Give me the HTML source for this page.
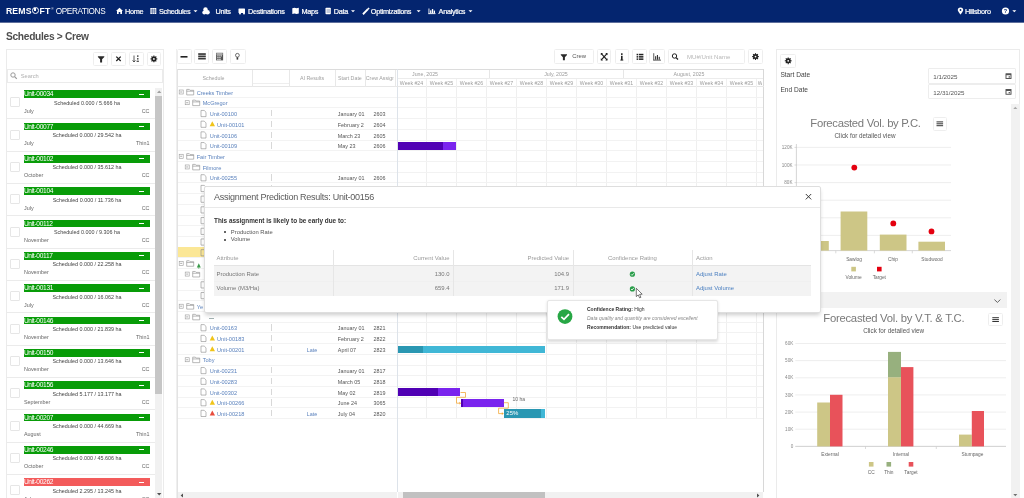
<!DOCTYPE html>
<html><head><meta charset="utf-8"><style>
*{box-sizing:border-box}
html,body{margin:0;padding:0}
body{will-change:transform;width:1024px;height:498px;overflow:hidden;position:relative;background:#fff;font-family:"Liberation Sans",sans-serif;color:#333}
.a{position:absolute;white-space:nowrap}
.nt{position:absolute;color:#fff;font-size:7.3px;top:7.6px;line-height:8px;white-space:nowrap;letter-spacing:-0.3px;-webkit-text-stroke:0.2px #fff}
.btn{position:absolute;border:1px solid #eeeeee;border-radius:1.5px;background:#fff}
.li{position:absolute;left:6px;width:149px;border-bottom:1px solid #ebebeb}
.gb{position:absolute;left:17.7px;top:3.3px;width:126.3px;height:7.7px;background:#089c08;color:#fff;font-size:6.6px;line-height:7.8px;padding-left:0.2px;letter-spacing:-0.3px;white-space:nowrap}
.gb.red{background:#f35b5b}
.gb i{position:absolute;right:6px;top:3.3px;width:4.6px;height:1.1px;background:#fff}
.cb{position:absolute;left:3.6px;top:10.3px;width:10px;height:10px;border:1px solid #e6e6e6;border-radius:1px}
.sc{position:absolute;left:0;width:149px;top:12.6px;text-align:center;font-size:5.4px;line-height:6px;color:#444;padding-left:13px;white-space:nowrap}
.mo{position:absolute;left:18px;top:20.8px;font-size:5.4px;line-height:6px;color:#666}
.ty{position:absolute;right:5.5px;top:20.8px;font-size:5.4px;line-height:6px;color:#666}
.rw{position:absolute;left:177px;width:221px;border-bottom:1px solid #efefef}
.rt{position:absolute;font-size:5.6px;white-space:nowrap}
.lk{color:#5b82bd}
.pipe{position:absolute;width:0.7px;background:#d8d8d8}
.hd{position:absolute;font-size:5.3px;color:#a0a0a0;white-space:nowrap}
</style></head><body>
<div class="a" style="left:0;top:0;width:1024px;height:22px;background:#04256f"></div><div class="a" style="left:0;top:22px;width:1024px;height:1px;background:#5e6f9c"></div>
<div class="a" style="left:5.9px;top:6.6px;color:#fff;font-size:8.7px;line-height:9px;letter-spacing:0.2px;font-weight:bold">REMS<span style="display:inline-block;width:6.8px;height:6.8px;border:1.7px solid #fff;border-radius:50%;vertical-align:-0.3px;margin:0 0.4px;position:relative"><span style="position:absolute;left:1.1px;top:0.4px;width:1.3px;height:2.6px;background:#fff"></span></span>FT</div>
<div class="a" style="left:51.3px;top:7.9px;color:#fff;font-size:3.2px;line-height:3px">&#174;</div>
<div class="a" style="left:55.7px;top:6.8px;color:#fff;font-size:8.2px;line-height:9px;letter-spacing:-0.35px">OPERATIONS</div>
<div class="nt" style="left:125px">Home</div>
<div class="nt" style="left:159px">Schedules</div>
<div class="nt" style="left:215.6px">Units</div>
<div class="nt" style="left:248px">Destinations</div>
<div class="nt" style="left:301.5px">Maps</div>
<div class="nt" style="left:333.7px">Data</div>
<div class="nt" style="left:370.8px">Optimizations</div>
<div class="nt" style="left:438.6px">Analytics</div>
<div class="nt" style="left:965px">Hillsboro</div>
<svg class="a" style="left:0;top:0" width="1024" height="22" viewBox="0 0 1024 22">
<g fill="#fff">
<path d="M116 11 L119.5 7.8 L123 11 L122 11 L122 14 L120.3 14 L120.3 12 L118.7 12 L118.7 14 L117 14 L117 11 Z"/>
<rect x="150.3" y="8" width="6" height="6" rx="0.5"/>
<path d="M193.5 10.2 L197.5 10.2 L195.5 12.3 Z"/>
<circle cx="205.5" cy="9.5" r="2.2"/><circle cx="207.5" cy="12.3" r="2.3"/><circle cx="204.3" cy="12.6" r="2"/>
<rect x="238.5" y="8.5" width="6.5" height="4.6" rx="0.6"/><circle cx="240" cy="13.5" r="1"/><circle cx="244" cy="13.5" r="1"/>
<path d="M292.3 8.3 L294.5 7.8 L296.6 8.3 L298.8 7.8 L298.8 13.6 L296.6 14.1 L294.5 13.6 L292.3 14.1 Z"/>
<rect x="325.5" y="7.8" width="5.3" height="6.5" rx="0.8"/>
<path d="M351 10.2 L355 10.2 L353 12.3 Z"/>
<path d="M362.3 13.6 L367.2 8.4 L368.6 9.8 L363.6 14.9 Z"/><path d="M368.5 7.2 L369 8.2 L370 8.5 L369 8.9 L368.5 9.9 L368 8.9 L367 8.5 L368 8.2 Z"/>
<path d="M416.6 10.2 L420.6 10.2 L418.6 12.3 Z"/>
<rect x="428.5" y="8.5" width="0.9" height="5.6"/><rect x="428.5" y="13.2" width="7" height="0.9"/><rect x="430.1" y="10.3" width="1.3" height="2.9"/><rect x="431.9" y="9" width="1.3" height="4.2"/><rect x="433.7" y="10.6" width="1.3" height="2.6"/>
<path d="M468.5 10.2 L472.5 10.2 L470.5 12.3 Z"/>
<path d="M960.5 7.6 C958.6 7.6 957.8 9 957.8 10 C957.8 11.5 960.5 14.6 960.5 14.6 C960.5 14.6 963.2 11.5 963.2 10 C963.2 9 962.4 7.6 960.5 7.6 Z"/>
<circle cx="1005.5" cy="11" r="3.6"/>
<path d="M1012.3 10.2 L1016.3 10.2 L1014.3 12.3 Z"/>
</g>
<circle cx="960.5" cy="10" r="0.9" fill="#04256f"/>
<text x="1005.5" y="13" font-size="5.5" font-weight="bold" text-anchor="middle" fill="#04256f" font-family="Liberation Sans">?</text>
<g stroke="#04256f" stroke-width="0.5"><line x1="150.3" y1="10" x2="156.3" y2="10"/><line x1="150.3" y1="12" x2="156.3" y2="12"/><line x1="152.3" y1="8.5" x2="152.3" y2="14"/><line x1="154.3" y1="8.5" x2="154.3" y2="14"/>
<line x1="326.5" y1="10" x2="330" y2="10"/><line x1="326.5" y1="12" x2="330" y2="12"/></g>
</svg>
<div class="a" style="left:6px;top:31.6px;font-size:10.2px;line-height:10px;font-weight:bold;color:#4e4e4e;letter-spacing:-0.3px">Schedules &gt; Crew</div>
<div class="a" style="left:5.5px;top:49px;width:158.3px;height:470px;border:1px solid #ebebeb"></div>
<div class="btn" style="left:93.4px;top:52px;width:14.6px;height:14px"></div>
<div class="btn" style="left:111.2px;top:52px;width:14.6px;height:14px"></div>
<div class="btn" style="left:128.6px;top:52px;width:15px;height:14px"></div>
<div class="btn" style="left:146.6px;top:52px;width:14.6px;height:14px"></div>
<div class="a" style="left:7px;top:69px;width:155.8px;height:14.4px;border:1px solid #ebebeb"></div>
<div class="a" style="left:20.7px;top:72.8px;font-size:5.7px;line-height:7px;color:#b0b0b0">Search</div>
<div class="li" style="top:87.00px;height:32.33px"><div class="cb"></div><div class="gb">Unit-00034<i></i></div><div class="sc">Scheduled 0.000 / 5.666 ha</div><div class="mo">July</div><div class="ty">CC</div></div>
<div class="li" style="top:119.33px;height:32.33px"><div class="cb"></div><div class="gb">Unit-00077<i></i></div><div class="sc">Scheduled 0.000 / 29.542 ha</div><div class="mo">July</div><div class="ty">Thin1</div></div>
<div class="li" style="top:151.66px;height:32.33px"><div class="cb"></div><div class="gb">Unit-00102<i></i></div><div class="sc">Scheduled 0.000 / 35.612 ha</div><div class="mo">October</div><div class="ty">CC</div></div>
<div class="li" style="top:183.99px;height:32.33px"><div class="cb"></div><div class="gb">Unit-00104<i></i></div><div class="sc">Scheduled 0.000 / 11.736 ha</div><div class="mo">July</div><div class="ty">CC</div></div>
<div class="li" style="top:216.32px;height:32.33px"><div class="cb"></div><div class="gb">Unit-00112<i></i></div><div class="sc">Scheduled 0.000 / 9.306 ha</div><div class="mo">November</div><div class="ty">CC</div></div>
<div class="li" style="top:248.65px;height:32.33px"><div class="cb"></div><div class="gb">Unit-00117<i></i></div><div class="sc">Scheduled 0.000 / 22.258 ha</div><div class="mo">November</div><div class="ty">CC</div></div>
<div class="li" style="top:280.98px;height:32.33px"><div class="cb"></div><div class="gb">Unit-00131<i></i></div><div class="sc">Scheduled 0.000 / 16.062 ha</div><div class="mo">July</div><div class="ty">CC</div></div>
<div class="li" style="top:313.31px;height:32.33px"><div class="cb"></div><div class="gb">Unit-00146<i></i></div><div class="sc">Scheduled 0.000 / 21.839 ha</div><div class="mo">November</div><div class="ty">Thin1</div></div>
<div class="li" style="top:345.64px;height:32.33px"><div class="cb"></div><div class="gb">Unit-00150<i></i></div><div class="sc">Scheduled 0.000 / 13.646 ha</div><div class="mo">November</div><div class="ty">CC</div></div>
<div class="li" style="top:377.97px;height:32.33px"><div class="cb"></div><div class="gb">Unit-00156<i></i></div><div class="sc">Scheduled 5.177 / 13.177 ha</div><div class="mo">September</div><div class="ty">CC</div></div>
<div class="li" style="top:410.30px;height:32.33px"><div class="cb"></div><div class="gb">Unit-00207<i></i></div><div class="sc">Scheduled 0.000 / 44.669 ha</div><div class="mo">August</div><div class="ty">Thin1</div></div>
<div class="li" style="top:442.63px;height:32.33px"><div class="cb"></div><div class="gb">Unit-00246<i></i></div><div class="sc">Scheduled 0.000 / 45.606 ha</div><div class="mo">October</div><div class="ty">CC</div></div>
<div class="li" style="top:474.96px;height:32.33px"><div class="cb"></div><div class="gb red">Unit-00262<i></i></div><div class="sc">Scheduled 2.295 / 13.245 ha</div><div class="mo">July</div><div class="ty">CC</div></div>
<div class="a" style="left:155.4px;top:88px;width:6.6px;height:410px;background:#f1f1f1"></div>
<div class="a" style="left:155.4px;top:95.6px;width:6.6px;height:298px;background:#c6c6c6"></div>
<svg class="a" style="left:155px;top:88px" width="8" height="8"><path d="M2 5 L4.2 2.6 L6.4 5 Z" fill="#a0a0a0"/></svg>
<svg class="a" style="left:155px;top:490px" width="8" height="8"><path d="M2 3 L4.2 5.4 L6.4 3 Z" fill="#505050"/></svg>
<svg class="a" style="left:90px;top:50px" width="75" height="18" viewBox="90 50 75 18">
<path d="M97.9 56.2 L104.3 56.2 L104.3 57 L102.1 59.2 L102.1 62.4 L100.1 62.4 L100.1 59.2 L97.9 57 Z" fill="#2a2a2a"/>
<path d="M116.3 56.6 L120.7 61 M120.7 56.6 L116.3 61" stroke="#222" stroke-width="1.3"/>
<path d="M134 55.5 L134 62 M132.6 60.4 L134 62 L135.4 60.4" stroke="#333" stroke-width="0.8" fill="none"/>
<rect x="137" y="55.3" width="1.5" height="1.6" fill="#555"/><rect x="137" y="58" width="1.5" height="1.6" fill="#555"/><rect x="136.6" y="60.6" width="2.3" height="1.4" fill="#555"/>
<circle cx="153.9" cy="58.9" r="2.5" fill="#222"/><circle cx="153.9" cy="58.9" r="0.9" fill="#fff"/>
<g stroke="#222" stroke-width="1.1"><line x1="153.9" y1="55.5" x2="153.9" y2="62.3"/><line x1="150.5" y1="58.9" x2="157.3" y2="58.9"/><line x1="151.5" y1="56.5" x2="156.3" y2="61.3"/><line x1="156.3" y1="56.5" x2="151.5" y2="61.3"/></g>
<circle cx="153.9" cy="58.9" r="0.9" fill="#fff"/>
</svg>
<svg class="a" style="left:8px;top:70px" width="12" height="12"><circle cx="5" cy="5" r="2.2" stroke="#999" stroke-width="1" fill="none"/><line x1="6.6" y1="6.6" x2="8.8" y2="8.8" stroke="#999" stroke-width="1.2"/></svg>
<div class="a" style="left:175.5px;top:49px;width:1px;height:449px;background:#efefef"></div>
<div class="btn" style="left:176.6px;top:49.4px;width:15.1px;height:14.8px"></div>
<div class="btn" style="left:194px;top:49.4px;width:15.0px;height:14.8px"></div>
<div class="btn" style="left:212px;top:49.4px;width:15.0px;height:14.8px"></div>
<div class="btn" style="left:230px;top:49.4px;width:16.0px;height:14.8px"></div>
<div class="btn" style="left:553.6px;top:49.2px;width:40.4px;height:14.8px"></div>
<div class="btn" style="left:596.7px;top:49.2px;width:14.8px;height:14.8px"></div>
<div class="btn" style="left:614.5px;top:49.2px;width:14.5px;height:14.8px"></div>
<div class="btn" style="left:632px;top:49.2px;width:15.3px;height:14.8px"></div>
<div class="btn" style="left:649.4px;top:49.2px;width:15.3px;height:14.8px"></div>
<div class="btn" style="left:668.4px;top:49.2px;width:76.6px;height:14.8px"></div>
<div class="btn" style="left:748px;top:49.2px;width:15.0px;height:14.8px"></div>
<div class="a" style="left:572.3px;top:53.4px;font-size:5.9px;line-height:7px;color:#555">Crew</div>
<div class="a" style="left:687px;top:53.4px;font-size:6.1px;line-height:7px;color:#b8b8b8">MU#/Unit Name</div>
<svg class="a" style="left:170px;top:45px" width="600" height="24" viewBox="170 45 600 24">
<rect x="180.5" y="56" width="7" height="1.6" fill="#222"/>
<g fill="#3a3a3a"><rect x="198.2" y="53.2" width="7.6" height="1.7"/><rect x="198.2" y="55.5" width="7.6" height="1.7"/><rect x="198.2" y="57.8" width="7.6" height="1.7"/></g>
<rect x="216.1" y="52.8" width="7" height="7.6" fill="#555"/><rect x="216.6" y="53.5" width="6" height="1" fill="#fff"/><g fill="#fff"><rect x="217.3" y="55.3" width="1.3" height="1.1"/><rect x="219.3" y="55.3" width="1.3" height="1.1"/><rect x="221" y="55.3" width="0.8" height="1.1"/><rect x="217.3" y="57.2" width="1.3" height="1.1"/><rect x="219.3" y="57.2" width="1.3" height="1.1"/><rect x="217.3" y="59.1" width="1.3" height="1.1"/><rect x="219.3" y="59.1" width="1.3" height="1.1"/></g>
<circle cx="237.4" cy="55.3" r="1.9" fill="none" stroke="#333" stroke-width="0.7"/><rect x="236.6" y="57.3" width="1.6" height="2.3" fill="#333"/>
<path d="M560.8 54.3 L567 54.3 L567 55.1 L564.9 57.2 L564.9 60.2 L562.9 60.2 L562.9 57.2 L560.8 55.1 Z" fill="#2a2a2a"/>
<g stroke="#222" stroke-width="1.2"><line x1="601.3" y1="53.6" x2="607" y2="59.8"/><line x1="607" y1="53.6" x2="601.3" y2="59.8"/></g>
<g fill="#222"><path d="M600.8 53 L603 53 L600.8 55.2Z"/><path d="M607.5 53 L605.3 53 L607.5 55.2Z"/><path d="M600.8 60.4 L603 60.4 L600.8 58.2Z"/><path d="M607.5 60.4 L605.3 60.4 L607.5 58.2Z"/></g>
<rect x="621" y="53.3" width="1.6" height="1.6" fill="#222"/><rect x="621" y="55.8" width="1.6" height="4.4" fill="#222"/><rect x="620.3" y="59.6" width="3" height="0.9" fill="#222"/>
<g fill="#222"><rect x="636.6" y="53.8" width="1.5" height="1.5"/><rect x="638.8" y="53.8" width="4.6" height="1.5"/><rect x="636.6" y="56.1" width="1.5" height="1.5"/><rect x="638.8" y="56.1" width="4.6" height="1.5"/><rect x="636.6" y="58.4" width="1.5" height="1.5"/><rect x="638.8" y="58.4" width="4.6" height="1.5"/></g>
<g fill="#333"><rect x="653.4" y="53.2" width="0.8" height="7.2"/><rect x="653.4" y="59.7" width="7.6" height="0.8"/><rect x="655.1" y="56.2" width="1.1" height="3.5"/><rect x="656.9" y="55" width="1.1" height="4.7"/><rect x="658.7" y="56.8" width="1.1" height="2.9"/></g>
<circle cx="674.5" cy="56" r="2.2" fill="none" stroke="#222" stroke-width="1"/><line x1="676.1" y1="57.6" x2="678" y2="59.5" stroke="#222" stroke-width="1.3"/>
<circle cx="755.5" cy="56.6" r="2.5" fill="#222"/>
<g stroke="#222" stroke-width="1.1"><line x1="755.5" y1="53.2" x2="755.5" y2="60"/><line x1="752.1" y1="56.6" x2="758.9" y2="56.6"/><line x1="753.1" y1="54.2" x2="757.9" y2="59"/><line x1="757.9" y1="54.2" x2="753.1" y2="59"/></g>
<circle cx="755.5" cy="56.6" r="0.9" fill="#fff"/>
</svg>
<div class="a" style="left:177px;top:68.5px;width:587px;height:1.6px;background:#dcdcdc"></div>
<div class="a" style="left:177px;top:68.5px;width:1px;height:430px;background:#e3e3e3"></div>
<div class="a" style="left:763.3px;top:68.5px;width:1px;height:423px;background:#d8d8d8"></div>
<div class="a" style="left:397.3px;top:68.5px;width:1px;height:423px;background:#dde3ea"></div>
<div class="a" style="left:177px;top:86.3px;width:587px;height:1px;background:#e6e6e6"></div>
<div class="a" style="left:252.3px;top:70px;width:0.8px;height:17px;background:#e8e8e8"></div>
<div class="a" style="left:288.75px;top:70px;width:0.8px;height:17px;background:#e8e8e8"></div>
<div class="a" style="left:335px;top:70px;width:0.8px;height:17px;background:#e8e8e8"></div>
<div class="a" style="left:364.8px;top:70px;width:0.8px;height:17px;background:#e8e8e8"></div>
<div class="a" style="left:394.5px;top:70px;width:0.8px;height:17px;background:#e8e8e8"></div>
<div class="a" style="left:253px;top:83.2px;width:35.5px;height:0.7px;background:#eeeeee"></div>
<div class="hd" style="left:183.5px;width:60px;text-align:center;top:74.8px;line-height:7px">Schedule</div>
<div class="hd" style="left:282px;width:60px;text-align:center;top:74.8px;line-height:7px">AI Results</div>
<div class="hd" style="left:319.9px;width:60px;text-align:center;top:74.8px;line-height:7px">Start Date</div>
<div class="hd" style="left:365.8px;width:28.5px;overflow:hidden;top:74.8px;line-height:7px">Crew Assign</div>
<div class="a" style="left:398px;top:78px;width:365px;height:0.8px;background:#ececec"></div>
<div class="a" style="left:489.4px;top:70px;width:0.8px;height:8px;background:#e6e6e6"></div>
<div class="a" style="left:622.7px;top:70px;width:0.8px;height:8px;background:#e6e6e6"></div>
<div class="hd" style="left:395px;width:60px;text-align:center;top:71px;line-height:7px;font-size:5.25px;color:#9c9c9c">June, 2025</div>
<div class="hd" style="left:526px;width:60px;text-align:center;top:71px;line-height:7px;font-size:5.25px;color:#9c9c9c">July, 2025</div>
<div class="hd" style="left:659px;width:60px;text-align:center;top:71px;line-height:7px;font-size:5.25px;color:#9c9c9c">August, 2025</div>
<div class="hd" style="left:397.5px;width:28px;text-align:center;top:79.6px;line-height:7px;font-size:5.2px;color:#9c9c9c">Week #24</div>
<div class="a" style="left:426.4px;top:78.5px;width:0.7px;height:8px;background:#f0f0f0"></div>
<div class="hd" style="left:427.5px;width:28px;text-align:center;top:79.6px;line-height:7px;font-size:5.2px;color:#9c9c9c">Week #25</div>
<div class="a" style="left:456.4px;top:78.5px;width:0.7px;height:8px;background:#f0f0f0"></div>
<div class="hd" style="left:457.5px;width:28px;text-align:center;top:79.6px;line-height:7px;font-size:5.2px;color:#9c9c9c">Week #26</div>
<div class="a" style="left:486.4px;top:78.5px;width:0.7px;height:8px;background:#f0f0f0"></div>
<div class="hd" style="left:487.5px;width:28px;text-align:center;top:79.6px;line-height:7px;font-size:5.2px;color:#9c9c9c">Week #27</div>
<div class="a" style="left:516.4px;top:78.5px;width:0.7px;height:8px;background:#f0f0f0"></div>
<div class="hd" style="left:517.5px;width:28px;text-align:center;top:79.6px;line-height:7px;font-size:5.2px;color:#9c9c9c">Week #28</div>
<div class="a" style="left:546.4px;top:78.5px;width:0.7px;height:8px;background:#f0f0f0"></div>
<div class="hd" style="left:547.5px;width:28px;text-align:center;top:79.6px;line-height:7px;font-size:5.2px;color:#9c9c9c">Week #29</div>
<div class="a" style="left:576.4px;top:78.5px;width:0.7px;height:8px;background:#f0f0f0"></div>
<div class="hd" style="left:577.5px;width:28px;text-align:center;top:79.6px;line-height:7px;font-size:5.2px;color:#9c9c9c">Week #30</div>
<div class="a" style="left:606.4px;top:78.5px;width:0.7px;height:8px;background:#f0f0f0"></div>
<div class="hd" style="left:607.5px;width:28px;text-align:center;top:79.6px;line-height:7px;font-size:5.2px;color:#9c9c9c">Week #31</div>
<div class="a" style="left:636.4px;top:78.5px;width:0.7px;height:8px;background:#f0f0f0"></div>
<div class="hd" style="left:637.5px;width:28px;text-align:center;top:79.6px;line-height:7px;font-size:5.2px;color:#9c9c9c">Week #32</div>
<div class="a" style="left:666.4px;top:78.5px;width:0.7px;height:8px;background:#f0f0f0"></div>
<div class="hd" style="left:667.5px;width:28px;text-align:center;top:79.6px;line-height:7px;font-size:5.2px;color:#9c9c9c">Week #33</div>
<div class="a" style="left:696.4px;top:78.5px;width:0.7px;height:8px;background:#f0f0f0"></div>
<div class="hd" style="left:697.5px;width:28px;text-align:center;top:79.6px;line-height:7px;font-size:5.2px;color:#9c9c9c">Week #34</div>
<div class="a" style="left:726.4px;top:78.5px;width:0.7px;height:8px;background:#f0f0f0"></div>
<div class="hd" style="left:727.5px;width:28px;text-align:center;top:79.6px;line-height:7px;font-size:5.2px;color:#9c9c9c">Week #35</div>
<div class="a" style="left:756.4px;top:78.5px;width:0.7px;height:8px;background:#f0f0f0"></div>
<div class="hd" style="left:757.7px;width:4.5px;overflow:hidden;top:79.6px;line-height:7px;font-size:5.2px;color:#9c9c9c">W</div>
<div class="a" style="left:426.4px;top:87px;width:0.8px;height:331px;background:#efefef"></div>
<div class="a" style="left:456.4px;top:87px;width:0.8px;height:331px;background:#efefef"></div>
<div class="a" style="left:486.4px;top:87px;width:0.8px;height:331px;background:#efefef"></div>
<div class="a" style="left:516.4px;top:87px;width:0.8px;height:331px;background:#efefef"></div>
<div class="a" style="left:546.4px;top:87px;width:0.8px;height:331px;background:#efefef"></div>
<div class="a" style="left:576.4px;top:87px;width:0.8px;height:331px;background:#efefef"></div>
<div class="a" style="left:606.4px;top:87px;width:0.8px;height:331px;background:#efefef"></div>
<div class="a" style="left:636.4px;top:87px;width:0.8px;height:331px;background:#efefef"></div>
<div class="a" style="left:666.4px;top:87px;width:0.8px;height:331px;background:#efefef"></div>
<div class="a" style="left:696.4px;top:87px;width:0.8px;height:331px;background:#efefef"></div>
<div class="a" style="left:726.4px;top:87px;width:0.8px;height:331px;background:#efefef"></div>
<div class="a" style="left:756.4px;top:87px;width:0.8px;height:331px;background:#efefef"></div>
<div class="a" style="left:178px;top:96.76px;width:219px;height:0.7px;background:#f3f3f3"></div>
<div class="a" style="left:398px;top:96.76px;width:365px;height:0.7px;background:#f2f2f2"></div>
<div class="a" style="left:178px;top:107.47px;width:219px;height:0.7px;background:#f3f3f3"></div>
<div class="a" style="left:398px;top:107.47px;width:365px;height:0.7px;background:#f2f2f2"></div>
<div class="a" style="left:178px;top:118.18px;width:219px;height:0.7px;background:#f3f3f3"></div>
<div class="a" style="left:398px;top:118.18px;width:365px;height:0.7px;background:#f2f2f2"></div>
<div class="a" style="left:178px;top:128.89px;width:219px;height:0.7px;background:#f3f3f3"></div>
<div class="a" style="left:398px;top:128.89px;width:365px;height:0.7px;background:#f2f2f2"></div>
<div class="a" style="left:178px;top:139.60px;width:219px;height:0.7px;background:#f3f3f3"></div>
<div class="a" style="left:398px;top:139.60px;width:365px;height:0.7px;background:#f2f2f2"></div>
<div class="a" style="left:178px;top:150.31px;width:219px;height:0.7px;background:#f3f3f3"></div>
<div class="a" style="left:398px;top:150.31px;width:365px;height:0.7px;background:#f2f2f2"></div>
<div class="a" style="left:178px;top:161.02px;width:219px;height:0.7px;background:#f3f3f3"></div>
<div class="a" style="left:398px;top:161.02px;width:365px;height:0.7px;background:#f2f2f2"></div>
<div class="a" style="left:178px;top:171.73px;width:219px;height:0.7px;background:#f3f3f3"></div>
<div class="a" style="left:398px;top:171.73px;width:365px;height:0.7px;background:#f2f2f2"></div>
<div class="a" style="left:178px;top:182.44px;width:219px;height:0.7px;background:#f3f3f3"></div>
<div class="a" style="left:398px;top:182.44px;width:365px;height:0.7px;background:#f2f2f2"></div>
<div class="a" style="left:178px;top:193.15px;width:219px;height:0.7px;background:#f3f3f3"></div>
<div class="a" style="left:398px;top:193.15px;width:365px;height:0.7px;background:#f2f2f2"></div>
<div class="a" style="left:178px;top:203.86px;width:219px;height:0.7px;background:#f3f3f3"></div>
<div class="a" style="left:398px;top:203.86px;width:365px;height:0.7px;background:#f2f2f2"></div>
<div class="a" style="left:178px;top:214.57px;width:219px;height:0.7px;background:#f3f3f3"></div>
<div class="a" style="left:398px;top:214.57px;width:365px;height:0.7px;background:#f2f2f2"></div>
<div class="a" style="left:178px;top:225.28px;width:219px;height:0.7px;background:#f3f3f3"></div>
<div class="a" style="left:398px;top:225.28px;width:365px;height:0.7px;background:#f2f2f2"></div>
<div class="a" style="left:178px;top:235.99px;width:219px;height:0.7px;background:#f3f3f3"></div>
<div class="a" style="left:398px;top:235.99px;width:365px;height:0.7px;background:#f2f2f2"></div>
<div class="a" style="left:178px;top:246.70px;width:219px;height:0.7px;background:#f3f3f3"></div>
<div class="a" style="left:398px;top:246.70px;width:365px;height:0.7px;background:#f2f2f2"></div>
<div class="a" style="left:178px;top:257.41px;width:219px;height:0.7px;background:#f3f3f3"></div>
<div class="a" style="left:398px;top:257.41px;width:365px;height:0.7px;background:#f2f2f2"></div>
<div class="a" style="left:178px;top:268.12px;width:219px;height:0.7px;background:#f3f3f3"></div>
<div class="a" style="left:398px;top:268.12px;width:365px;height:0.7px;background:#f2f2f2"></div>
<div class="a" style="left:178px;top:278.83px;width:219px;height:0.7px;background:#f3f3f3"></div>
<div class="a" style="left:398px;top:278.83px;width:365px;height:0.7px;background:#f2f2f2"></div>
<div class="a" style="left:178px;top:289.54px;width:219px;height:0.7px;background:#f3f3f3"></div>
<div class="a" style="left:398px;top:289.54px;width:365px;height:0.7px;background:#f2f2f2"></div>
<div class="a" style="left:178px;top:300.25px;width:219px;height:0.7px;background:#f3f3f3"></div>
<div class="a" style="left:398px;top:300.25px;width:365px;height:0.7px;background:#f2f2f2"></div>
<div class="a" style="left:178px;top:310.96px;width:219px;height:0.7px;background:#f3f3f3"></div>
<div class="a" style="left:398px;top:310.96px;width:365px;height:0.7px;background:#f2f2f2"></div>
<div class="a" style="left:178px;top:321.67px;width:219px;height:0.7px;background:#f3f3f3"></div>
<div class="a" style="left:398px;top:321.67px;width:365px;height:0.7px;background:#f2f2f2"></div>
<div class="a" style="left:178px;top:332.38px;width:219px;height:0.7px;background:#f3f3f3"></div>
<div class="a" style="left:398px;top:332.38px;width:365px;height:0.7px;background:#f2f2f2"></div>
<div class="a" style="left:178px;top:343.09px;width:219px;height:0.7px;background:#f3f3f3"></div>
<div class="a" style="left:398px;top:343.09px;width:365px;height:0.7px;background:#f2f2f2"></div>
<div class="a" style="left:178px;top:353.80px;width:219px;height:0.7px;background:#f3f3f3"></div>
<div class="a" style="left:398px;top:353.80px;width:365px;height:0.7px;background:#f2f2f2"></div>
<div class="a" style="left:178px;top:364.51px;width:219px;height:0.7px;background:#f3f3f3"></div>
<div class="a" style="left:398px;top:364.51px;width:365px;height:0.7px;background:#f2f2f2"></div>
<div class="a" style="left:178px;top:375.22px;width:219px;height:0.7px;background:#f3f3f3"></div>
<div class="a" style="left:398px;top:375.22px;width:365px;height:0.7px;background:#f2f2f2"></div>
<div class="a" style="left:178px;top:385.93px;width:219px;height:0.7px;background:#f3f3f3"></div>
<div class="a" style="left:398px;top:385.93px;width:365px;height:0.7px;background:#f2f2f2"></div>
<div class="a" style="left:178px;top:396.64px;width:219px;height:0.7px;background:#f3f3f3"></div>
<div class="a" style="left:398px;top:396.64px;width:365px;height:0.7px;background:#f2f2f2"></div>
<div class="a" style="left:178px;top:407.35px;width:219px;height:0.7px;background:#f3f3f3"></div>
<div class="a" style="left:398px;top:407.35px;width:365px;height:0.7px;background:#f2f2f2"></div>
<div class="a" style="left:178px;top:418.06px;width:219px;height:0.7px;background:#f3f3f3"></div>
<div class="a" style="left:398px;top:418.06px;width:365px;height:0.7px;background:#f2f2f2"></div>
<div class="a" style="left:178px;top:247.30px;width:219px;height:10.11px;background:#fbe796"></div>
<div class="rt lk" style="left:196.7px;top:88.71px;line-height:8px">Creeks Timber</div>
<div class="rt lk" style="left:202.7px;top:99.42px;line-height:8px">McGregor</div>
<div class="rt lk" style="left:209.7px;top:110.13px;line-height:8px">Unit-00100</div>
<div class="pipe" style="left:271px;top:110.23px;height:6.2px"></div>
<div class="rt" style="left:337.8px;top:110.13px;line-height:8px;font-size:5.4px;color:#555">January 01</div>
<div class="rt" style="left:373.4px;top:110.13px;line-height:8px;font-size:5.4px;color:#555">2603</div>
<div class="rt lk" style="left:217px;top:120.84px;line-height:8px">Unit-00101</div>
<div class="pipe" style="left:271px;top:120.94px;height:6.2px"></div>
<div class="rt" style="left:337.8px;top:120.84px;line-height:8px;font-size:5.4px;color:#555">February 2</div>
<div class="rt" style="left:373.4px;top:120.84px;line-height:8px;font-size:5.4px;color:#555">2604</div>
<div class="rt lk" style="left:209.7px;top:131.54px;line-height:8px">Unit-00106</div>
<div class="pipe" style="left:271px;top:131.65px;height:6.2px"></div>
<div class="rt" style="left:337.8px;top:131.54px;line-height:8px;font-size:5.4px;color:#555">March 23</div>
<div class="rt" style="left:373.4px;top:131.54px;line-height:8px;font-size:5.4px;color:#555">2605</div>
<div class="rt lk" style="left:209.7px;top:142.25px;line-height:8px">Unit-00109</div>
<div class="pipe" style="left:271px;top:142.36px;height:6.2px"></div>
<div class="rt" style="left:337.8px;top:142.25px;line-height:8px;font-size:5.4px;color:#555">May 23</div>
<div class="rt" style="left:373.4px;top:142.25px;line-height:8px;font-size:5.4px;color:#555">2606</div>
<div class="rt lk" style="left:196.7px;top:152.97px;line-height:8px">Fair Timber</div>
<div class="rt lk" style="left:202.7px;top:163.67px;line-height:8px">Filmore</div>
<div class="rt lk" style="left:209.7px;top:174.38px;line-height:8px">Unit-00255</div>
<div class="pipe" style="left:271px;top:174.49px;height:6.2px"></div>
<div class="rt" style="left:337.8px;top:174.38px;line-height:8px;font-size:5.4px;color:#555">January 01</div>
<div class="rt" style="left:373.4px;top:174.38px;line-height:8px;font-size:5.4px;color:#555">2606</div>
<div class="pipe" style="left:271px;top:185.20px;height:6.2px"></div>
<div class="pipe" style="left:271px;top:195.91px;height:6.2px"></div>
<div class="pipe" style="left:271px;top:206.62px;height:6.2px"></div>
<div class="pipe" style="left:271px;top:217.33px;height:6.2px"></div>
<div class="pipe" style="left:271px;top:228.04px;height:6.2px"></div>
<div class="pipe" style="left:271px;top:238.75px;height:6.2px"></div>
<div class="pipe" style="left:271px;top:249.46px;height:6.2px"></div>
<div class="pipe" style="left:271px;top:281.59px;height:6.2px"></div>
<div class="pipe" style="left:271px;top:292.30px;height:6.2px"></div>
<div class="rt lk" style="left:196.7px;top:302.91px;line-height:8px">Ye</div>
<div class="rt lk" style="left:209.7px;top:324.32px;line-height:8px">Unit-00163</div>
<div class="pipe" style="left:271px;top:324.43px;height:6.2px"></div>
<div class="rt" style="left:337.8px;top:324.32px;line-height:8px;font-size:5.4px;color:#555">January 01</div>
<div class="rt" style="left:373.4px;top:324.32px;line-height:8px;font-size:5.4px;color:#555">2821</div>
<div class="rt lk" style="left:217px;top:335.04px;line-height:8px">Unit-00183</div>
<div class="pipe" style="left:271px;top:335.14px;height:6.2px"></div>
<div class="rt" style="left:337.8px;top:335.04px;line-height:8px;font-size:5.4px;color:#555">February 2</div>
<div class="rt" style="left:373.4px;top:335.04px;line-height:8px;font-size:5.4px;color:#555">2822</div>
<div class="rt lk" style="left:217px;top:345.75px;line-height:8px">Unit-00201</div>
<div class="pipe" style="left:271px;top:345.85px;height:6.2px"></div>
<div class="rt lk" style="left:306.7px;top:345.75px;line-height:8px;font-size:5.4px">Late</div>
<div class="rt" style="left:337.8px;top:345.75px;line-height:8px;font-size:5.4px;color:#555">April 07</div>
<div class="rt" style="left:373.4px;top:345.75px;line-height:8px;font-size:5.4px;color:#555">2823</div>
<div class="rt lk" style="left:202.7px;top:356.45px;line-height:8px">Toby</div>
<div class="rt lk" style="left:209.7px;top:367.17px;line-height:8px">Unit-00231</div>
<div class="pipe" style="left:271px;top:367.27px;height:6.2px"></div>
<div class="rt" style="left:337.8px;top:367.17px;line-height:8px;font-size:5.4px;color:#555">January 01</div>
<div class="rt" style="left:373.4px;top:367.17px;line-height:8px;font-size:5.4px;color:#555">2817</div>
<div class="rt lk" style="left:209.7px;top:377.88px;line-height:8px">Unit-00283</div>
<div class="pipe" style="left:271px;top:377.98px;height:6.2px"></div>
<div class="rt" style="left:337.8px;top:377.88px;line-height:8px;font-size:5.4px;color:#555">March 05</div>
<div class="rt" style="left:373.4px;top:377.88px;line-height:8px;font-size:5.4px;color:#555">2818</div>
<div class="rt lk" style="left:209.7px;top:388.58px;line-height:8px">Unit-00302</div>
<div class="pipe" style="left:271px;top:388.69px;height:6.2px"></div>
<div class="rt" style="left:337.8px;top:388.58px;line-height:8px;font-size:5.4px;color:#555">May 02</div>
<div class="rt" style="left:373.4px;top:388.58px;line-height:8px;font-size:5.4px;color:#555">2819</div>
<div class="rt lk" style="left:217px;top:399.30px;line-height:8px">Unit-00266</div>
<div class="pipe" style="left:271px;top:399.40px;height:6.2px"></div>
<div class="rt" style="left:337.8px;top:399.30px;line-height:8px;font-size:5.4px;color:#555">June 24</div>
<div class="rt" style="left:373.4px;top:399.30px;line-height:8px;font-size:5.4px;color:#555">3065</div>
<div class="rt lk" style="left:217px;top:410.01px;line-height:8px">Unit-00218</div>
<div class="pipe" style="left:271px;top:410.11px;height:6.2px"></div>
<div class="rt lk" style="left:306.7px;top:410.01px;line-height:8px;font-size:5.4px">Late</div>
<div class="rt" style="left:337.8px;top:410.01px;line-height:8px;font-size:5.4px;color:#555">July 04</div>
<div class="rt" style="left:373.4px;top:410.01px;line-height:8px;font-size:5.4px;color:#555">2820</div>
<svg class="a" style="left:170px;top:80px" width="240" height="350" viewBox="170 80 240 350"><rect x="179.2" y="90.01" width="4" height="4" fill="none" stroke="#9a9a9a" stroke-width="0.6"/><line x1="180.2" y1="92.01" x2="182.2" y2="92.01" stroke="#777" stroke-width="0.6"/><path d="M186.7 89.41 h2.6 l0.8 0.9 h3.6 v4.6 h-7 Z M186.7 91.21 h7" fill="none" stroke="#8a8a8a" stroke-width="0.6"/><rect x="185.2" y="100.72" width="4" height="4" fill="none" stroke="#9a9a9a" stroke-width="0.6"/><line x1="186.2" y1="102.72" x2="188.2" y2="102.72" stroke="#777" stroke-width="0.6"/><path d="M192.7 100.12 h2.6 l0.8 0.9 h3.6 v4.6 h-7 Z M192.7 101.92 h7" fill="none" stroke="#8a8a8a" stroke-width="0.6"/><path d="M201 110.43 h3.2 l1.8 1.8 v4.4 h-5 Z" fill="none" stroke="#8a8a8a" stroke-width="0.6"/><path d="M201 121.14 h3.2 l1.8 1.8 v4.4 h-5 Z" fill="none" stroke="#8a8a8a" stroke-width="0.6"/><path d="M212.3 121.34 L215.0 126.34 L209.7 126.34 Z" fill="#f0c419"/><path d="M201 131.84 h3.2 l1.8 1.8 v4.4 h-5 Z" fill="none" stroke="#8a8a8a" stroke-width="0.6"/><path d="M201 142.56 h3.2 l1.8 1.8 v4.4 h-5 Z" fill="none" stroke="#8a8a8a" stroke-width="0.6"/><rect x="179.2" y="154.27" width="4" height="4" fill="none" stroke="#9a9a9a" stroke-width="0.6"/><line x1="180.2" y1="156.27" x2="182.2" y2="156.27" stroke="#777" stroke-width="0.6"/><path d="M186.7 153.67 h2.6 l0.8 0.9 h3.6 v4.6 h-7 Z M186.7 155.47 h7" fill="none" stroke="#8a8a8a" stroke-width="0.6"/><rect x="185.2" y="164.97" width="4" height="4" fill="none" stroke="#9a9a9a" stroke-width="0.6"/><line x1="186.2" y1="166.97" x2="188.2" y2="166.97" stroke="#777" stroke-width="0.6"/><path d="M192.7 164.38 h2.6 l0.8 0.9 h3.6 v4.6 h-7 Z M192.7 166.17 h7" fill="none" stroke="#8a8a8a" stroke-width="0.6"/><path d="M201 174.69 h3.2 l1.8 1.8 v4.4 h-5 Z" fill="none" stroke="#8a8a8a" stroke-width="0.6"/><path d="M201 185.40 h3.2 l1.8 1.8 v4.4 h-5 Z" fill="none" stroke="#8a8a8a" stroke-width="0.6"/><path d="M201 196.10 h3.2 l1.8 1.8 v4.4 h-5 Z" fill="none" stroke="#8a8a8a" stroke-width="0.6"/><path d="M201 206.81 h3.2 l1.8 1.8 v4.4 h-5 Z" fill="none" stroke="#8a8a8a" stroke-width="0.6"/><path d="M201 217.53 h3.2 l1.8 1.8 v4.4 h-5 Z" fill="none" stroke="#8a8a8a" stroke-width="0.6"/><path d="M201 228.24 h3.2 l1.8 1.8 v4.4 h-5 Z" fill="none" stroke="#8a8a8a" stroke-width="0.6"/><path d="M201 238.94 h3.2 l1.8 1.8 v4.4 h-5 Z" fill="none" stroke="#8a8a8a" stroke-width="0.6"/><path d="M201 249.66 h3.2 l1.8 1.8 v4.4 h-5 Z" fill="none" stroke="#8a8a8a" stroke-width="0.6"/><rect x="179.2" y="261.37" width="4" height="4" fill="none" stroke="#9a9a9a" stroke-width="0.6"/><line x1="180.2" y1="263.37" x2="182.2" y2="263.37" stroke="#777" stroke-width="0.6"/><path d="M186.7 260.76 h2.6 l0.8 0.9 h3.6 v4.6 h-7 Z M186.7 262.56 h7" fill="none" stroke="#8a8a8a" stroke-width="0.6"/><rect x="185.2" y="272.08" width="4" height="4" fill="none" stroke="#9a9a9a" stroke-width="0.6"/><line x1="186.2" y1="274.08" x2="188.2" y2="274.08" stroke="#777" stroke-width="0.6"/><path d="M192.7 271.48 h2.6 l0.8 0.9 h3.6 v4.6 h-7 Z M192.7 273.28 h7" fill="none" stroke="#8a8a8a" stroke-width="0.6"/><path d="M201 281.79 h3.2 l1.8 1.8 v4.4 h-5 Z" fill="none" stroke="#8a8a8a" stroke-width="0.6"/><path d="M201 292.50 h3.2 l1.8 1.8 v4.4 h-5 Z" fill="none" stroke="#8a8a8a" stroke-width="0.6"/><rect x="179.2" y="304.21" width="4" height="4" fill="none" stroke="#9a9a9a" stroke-width="0.6"/><line x1="180.2" y1="306.21" x2="182.2" y2="306.21" stroke="#777" stroke-width="0.6"/><path d="M186.7 303.61 h2.6 l0.8 0.9 h3.6 v4.6 h-7 Z M186.7 305.41 h7" fill="none" stroke="#8a8a8a" stroke-width="0.6"/><rect x="185.2" y="314.92" width="4" height="4" fill="none" stroke="#9a9a9a" stroke-width="0.6"/><line x1="186.2" y1="316.92" x2="188.2" y2="316.92" stroke="#777" stroke-width="0.6"/><path d="M192.7 314.32 h2.6 l0.8 0.9 h3.6 v4.6 h-7 Z M192.7 316.12 h7" fill="none" stroke="#8a8a8a" stroke-width="0.6"/><path d="M201 324.62 h3.2 l1.8 1.8 v4.4 h-5 Z" fill="none" stroke="#8a8a8a" stroke-width="0.6"/><path d="M201 335.34 h3.2 l1.8 1.8 v4.4 h-5 Z" fill="none" stroke="#8a8a8a" stroke-width="0.6"/><path d="M212.3 335.54 L215.0 340.54 L209.7 340.54 Z" fill="#f0c419"/><path d="M201 346.05 h3.2 l1.8 1.8 v4.4 h-5 Z" fill="none" stroke="#8a8a8a" stroke-width="0.6"/><path d="M212.3 346.25 L215.0 351.25 L209.7 351.25 Z" fill="#f0c419"/><rect x="185.2" y="357.75" width="4" height="4" fill="none" stroke="#9a9a9a" stroke-width="0.6"/><line x1="186.2" y1="359.75" x2="188.2" y2="359.75" stroke="#777" stroke-width="0.6"/><path d="M192.7 357.15 h2.6 l0.8 0.9 h3.6 v4.6 h-7 Z M192.7 358.95 h7" fill="none" stroke="#8a8a8a" stroke-width="0.6"/><path d="M201 367.47 h3.2 l1.8 1.8 v4.4 h-5 Z" fill="none" stroke="#8a8a8a" stroke-width="0.6"/><path d="M201 378.18 h3.2 l1.8 1.8 v4.4 h-5 Z" fill="none" stroke="#8a8a8a" stroke-width="0.6"/><path d="M201 388.88 h3.2 l1.8 1.8 v4.4 h-5 Z" fill="none" stroke="#8a8a8a" stroke-width="0.6"/><path d="M201 399.60 h3.2 l1.8 1.8 v4.4 h-5 Z" fill="none" stroke="#8a8a8a" stroke-width="0.6"/><path d="M212.3 399.80 L215.0 404.80 L209.7 404.80 Z" fill="#f0c419"/><path d="M201 410.31 h3.2 l1.8 1.8 v4.4 h-5 Z" fill="none" stroke="#8a8a8a" stroke-width="0.6"/><path d="M212.3 410.51 L215.0 415.51 L209.7 415.51 Z" fill="#e84c3d"/><rect x="209" y="318" width="5" height="0.9" fill="#9aa"/><path d="M198.8 263.2 L200.8 267.6 L196.8 267.6 Z" fill="#3a9a4a"/><rect x="198.4" y="267.4" width="0.8" height="1.2" fill="#3a9a4a"/></svg>
<div class="a" style="left:398.2px;top:141.9px;width:58.2px;height:7.8px;background:#7a24ee"></div>
<div class="a" style="left:398.2px;top:141.9px;width:44.5px;height:7.8px;background:#5000b4"></div>
<div class="a" style="left:398.1px;top:345.5px;width:147.3px;height:7.5px;background:#40b7d6"></div>
<div class="a" style="left:398.1px;top:345.5px;width:25.3px;height:7.5px;background:#2a97b2"></div>
<div class="a" style="left:398.1px;top:388.3px;width:62.4px;height:7.6px;background:#7a24ee"></div>
<div class="a" style="left:398.1px;top:388.3px;width:40.3px;height:7.6px;background:#5000b4"></div>
<div class="a" style="left:461px;top:399.1px;width:42.8px;height:7.6px;background:#7a24ee"></div>
<div class="a" style="left:461px;top:399.1px;width:2.0px;height:7.6px;background:#5000b4"></div>
<div class="a" style="left:504.2px;top:409.4px;width:41.2px;height:8.2px;background:#40b7d6"></div>
<div class="a" style="left:504.2px;top:409.4px;width:36.8px;height:8.2px;background:#2a97b2"></div>
<div class="a" style="left:506.3px;top:410px;font-size:6px;line-height:7px;color:#fff">25%</div>
<div class="a" style="left:512.5px;top:396px;font-size:5px;line-height:7px;color:#666">10 ha</div>
<svg class="a" style="left:450px;top:385px" width="70" height="40" viewBox="450 385 70 40">
<g fill="none" stroke="#f2a83a" stroke-width="0.8">
<path d="M460.5 392.5 H465.5 V397.3 H456.5 V403.2 H459.5"/>
<path d="M503.8 402.7 H508.3 V408.2 H498.6 V413.6 H502"/>
</g>
<path d="M459.3 401.8 L461.2 403.2 L459.3 404.6 Z" fill="#f2a83a"/>
<path d="M501.8 412.2 L503.8 413.6 L501.8 415 Z" fill="#f2a83a"/>
</svg>
<div class="a" style="left:178px;top:491.6px;width:219px;height:7px;background:#f1f1f1"></div>
<div class="a" style="left:398px;top:491.6px;width:365px;height:7px;background:#f1f1f1"></div>
<div class="a" style="left:403px;top:491.6px;width:142px;height:7px;background:#c1c1c1"></div>
<svg class="a" style="left:178px;top:491.6px" width="8" height="7"><path d="M5 1.6 L2.6 3.6 L5 5.6 Z" fill="#505050"/></svg>
<svg class="a" style="left:754px;top:491.6px" width="8" height="7"><path d="M3 1.6 L5.4 3.6 L3 5.6 Z" fill="#505050"/></svg>
<div class="a" style="left:776px;top:49px;width:244px;height:460px;border:1px solid #ebebeb"></div>
<div class="btn" style="left:780.4px;top:53.5px;width:15.6px;height:14.5px"></div>
<div class="a" style="left:780.4px;top:70.5px;font-size:6.6px;line-height:8px;color:#444">Start Date</div>
<div class="a" style="left:780.4px;top:85.7px;font-size:6.6px;line-height:8px;color:#444">End Date</div>
<div class="a" style="left:928.3px;top:68.2px;width:88.2px;height:15.5px;border:1px solid #ededed;border-radius:1px"></div>
<div class="a" style="left:928.3px;top:84.1px;width:88.2px;height:15.3px;border:1px solid #ededed;border-radius:1px"></div>
<div class="a" style="left:933.2px;top:72.9px;font-size:6.25px;line-height:7px;color:#555">1/1/2025</div>
<div class="a" style="left:933.2px;top:88.6px;font-size:6.25px;line-height:7px;color:#555">12/31/2025</div>
<svg class="a" style="left:776px;top:49px" width="248" height="60" viewBox="776 49 248 60">
<circle cx="788.2" cy="60.8" r="2.5" fill="#222"/>
<g stroke="#222" stroke-width="1.1"><line x1="788.2" y1="57.4" x2="788.2" y2="64.2"/><line x1="784.8" y1="60.8" x2="791.6" y2="60.8"/><line x1="785.8" y1="58.4" x2="790.6" y2="63.2"/><line x1="790.6" y1="58.4" x2="785.8" y2="63.2"/></g>
<circle cx="788.2" cy="60.8" r="0.9" fill="#fff"/>
<rect x="1005.5" y="73.3" width="6" height="5.6" fill="#555" rx="0.5"/><rect x="1006.5" y="75.2" width="4" height="2.8" fill="#fff"/><rect x="1008.6" y="76.3" width="1.4" height="1.3" fill="#555"/>
<rect x="1005.5" y="89.1" width="6" height="5.6" fill="#555" rx="0.5"/><rect x="1006.5" y="91" width="4" height="2.8" fill="#fff"/><rect x="1008.6" y="92.1" width="1.4" height="1.3" fill="#555"/>
</svg>
<div class="a" style="left:1011px;top:104px;width:8.5px;height:394px;background:#f1f1f1"></div>
<svg class="a" style="left:1011px;top:104px" width="9" height="8"><path d="M2.3 5 L4.3 2.8 L6.3 5 Z" fill="#a8a8a8"/></svg>
<svg class="a" style="left:1011px;top:490.5px" width="9" height="8"><path d="M2.3 3 L4.3 5.2 L6.3 3 Z" fill="#707070"/></svg>
<div class="a" style="left:810.3px;top:115.6px;font-size:11.3px;line-height:14px;color:#7a7a7a;letter-spacing:-0.3px">Forecasted Vol. by P.C.</div>
<div class="a" style="left:815px;top:131.8px;width:100px;text-align:center;font-size:6.3px;line-height:8px;color:#555">Click for detailed view</div>
<div class="btn" style="left:933px;top:116.7px;width:13.5px;height:14.3px"></div>
<div class="btn" style="left:988.4px;top:312.7px;width:14.4px;height:13.8px"></div>
<svg class="a" style="left:776px;top:100px" width="240" height="190" viewBox="776 100 240 190"><g fill="#333"><rect x="936.5" y="121.4" width="6.6" height="1"/><rect x="936.5" y="123.3" width="6.6" height="1"/><rect x="936.5" y="125.2" width="6.6" height="1"/></g><g fill="#333"><rect x="992.3" y="317.2" width="6.6" height="1"/><rect x="992.3" y="319.1" width="6.6" height="1"/><rect x="992.3" y="321.0" width="6.6" height="1"/></g><line x1="797" y1="147.4" x2="951" y2="147.4" stroke="#e6e6e6" stroke-width="0.7"/><line x1="794.5" y1="147.4" x2="797" y2="147.4" stroke="#ccc" stroke-width="0.7"/><text x="792.5" y="149.0" font-size="4.6" text-anchor="end" fill="#888" font-family="Liberation Sans">120K</text><line x1="797" y1="165.0" x2="951" y2="165.0" stroke="#e6e6e6" stroke-width="0.7"/><line x1="794.5" y1="165.0" x2="797" y2="165.0" stroke="#ccc" stroke-width="0.7"/><text x="792.5" y="166.6" font-size="4.6" text-anchor="end" fill="#888" font-family="Liberation Sans">100K</text><line x1="797" y1="182.6" x2="951" y2="182.6" stroke="#e6e6e6" stroke-width="0.7"/><line x1="794.5" y1="182.6" x2="797" y2="182.6" stroke="#ccc" stroke-width="0.7"/><text x="792.5" y="184.2" font-size="4.6" text-anchor="end" fill="#888" font-family="Liberation Sans">80K</text><line x1="797" y1="200.2" x2="951" y2="200.2" stroke="#e6e6e6" stroke-width="0.7"/><line x1="794.5" y1="200.2" x2="797" y2="200.2" stroke="#ccc" stroke-width="0.7"/><text x="792.5" y="201.8" font-size="4.6" text-anchor="end" fill="#888" font-family="Liberation Sans">60K</text><line x1="797" y1="217.8" x2="951" y2="217.8" stroke="#e6e6e6" stroke-width="0.7"/><line x1="794.5" y1="217.8" x2="797" y2="217.8" stroke="#ccc" stroke-width="0.7"/><text x="792.5" y="219.4" font-size="4.6" text-anchor="end" fill="#888" font-family="Liberation Sans">40K</text><line x1="797" y1="235.4" x2="951" y2="235.4" stroke="#e6e6e6" stroke-width="0.7"/><line x1="794.5" y1="235.4" x2="797" y2="235.4" stroke="#ccc" stroke-width="0.7"/><text x="792.5" y="237.0" font-size="4.6" text-anchor="end" fill="#888" font-family="Liberation Sans">20K</text><line x1="796.4" y1="144" x2="796.4" y2="251" stroke="#ccc" stroke-width="0.8"/><line x1="796.4" y1="250.6" x2="951" y2="250.6" stroke="#ccc" stroke-width="0.8"/><line x1="835.8" y1="250.6" x2="835.8" y2="253.3" stroke="#ccc" stroke-width="0.7"/><line x1="874.4" y1="250.6" x2="874.4" y2="253.3" stroke="#ccc" stroke-width="0.7"/><line x1="912.3" y1="250.6" x2="912.3" y2="253.3" stroke="#ccc" stroke-width="0.7"/><rect x="802" y="241" width="26.8" height="9.6" fill="#cdc686"/><rect x="840.6" y="211.5" width="26.7" height="39.1" fill="#cdc686"/><rect x="879.8" y="234.6" width="26.7" height="16.0" fill="#cdc686"/><rect x="918.4" y="241.7" width="26.6" height="8.9" fill="#cdc686"/><circle cx="854.3" cy="167.6" r="2.9" fill="#e4000f"/><circle cx="893.3" cy="223.4" r="2.9" fill="#e4000f"/><circle cx="931.5" cy="231.4" r="2.9" fill="#e4000f"/><text x="854" y="260.6" font-size="4.8" text-anchor="middle" fill="#666" font-family="Liberation Sans">Sawlog</text><text x="893" y="260.6" font-size="4.8" text-anchor="middle" fill="#666" font-family="Liberation Sans">Chip</text><text x="932" y="260.6" font-size="4.8" text-anchor="middle" fill="#666" font-family="Liberation Sans">Studwood</text><rect x="851.3" y="266.8" width="4.6" height="4.6" fill="#cdc686"/><rect x="877" y="266.8" width="4.6" height="4.6" fill="#e4000f"/><text x="853.6" y="279" font-size="4.8" text-anchor="middle" fill="#666" font-family="Liberation Sans">Volume</text><text x="879.3" y="279" font-size="4.8" text-anchor="middle" fill="#666" font-family="Liberation Sans">Target</text></svg>
<div class="a" style="left:777px;top:291.8px;width:230px;height:16.7px;background:#f2f2f2"></div>
<svg class="a" style="left:990px;top:295px" width="14" height="12"><path d="M4.4 4.6 L7.4 7.4 L10.4 4.6" fill="none" stroke="#555" stroke-width="0.9"/></svg>
<div class="a" style="left:823.3px;top:311.3px;font-size:11.3px;line-height:14px;color:#7a7a7a;letter-spacing:-0.26px">Forecasted Vol. by V.T. &amp; T.C.</div>
<div class="a" style="left:843.6px;top:327.2px;width:100px;text-align:center;font-size:6.3px;line-height:8px;color:#555">Click for detailed view</div>
<svg class="a" style="left:776px;top:310px" width="240" height="188" viewBox="776 310 240 188"><g fill="#333"><rect x="992.3" y="317.2" width="6.6" height="1"/><rect x="992.3" y="319.1" width="6.6" height="1"/><rect x="992.3" y="321.0" width="6.6" height="1"/></g><line x1="795.3" y1="343.5" x2="1006" y2="343.5" stroke="#e6e6e6" stroke-width="0.7"/><text x="793.3" y="345.1" font-size="4.6" text-anchor="end" fill="#888" font-family="Liberation Sans">60K</text><line x1="795.3" y1="360.6" x2="1006" y2="360.6" stroke="#e6e6e6" stroke-width="0.7"/><text x="793.3" y="362.2" font-size="4.6" text-anchor="end" fill="#888" font-family="Liberation Sans">50K</text><line x1="795.3" y1="377.8" x2="1006" y2="377.8" stroke="#e6e6e6" stroke-width="0.7"/><text x="793.3" y="379.4" font-size="4.6" text-anchor="end" fill="#888" font-family="Liberation Sans">40K</text><line x1="795.3" y1="394.9" x2="1006" y2="394.9" stroke="#e6e6e6" stroke-width="0.7"/><text x="793.3" y="396.6" font-size="4.6" text-anchor="end" fill="#888" font-family="Liberation Sans">30K</text><line x1="795.3" y1="412.1" x2="1006" y2="412.1" stroke="#e6e6e6" stroke-width="0.7"/><text x="793.3" y="413.7" font-size="4.6" text-anchor="end" fill="#888" font-family="Liberation Sans">20K</text><line x1="795.3" y1="429.2" x2="1006" y2="429.2" stroke="#e6e6e6" stroke-width="0.7"/><text x="793.3" y="430.9" font-size="4.6" text-anchor="end" fill="#888" font-family="Liberation Sans">10K</text><line x1="795.3" y1="446.4" x2="1006" y2="446.4" stroke="#e6e6e6" stroke-width="0.7"/><text x="793.3" y="448.0" font-size="4.6" text-anchor="end" fill="#888" font-family="Liberation Sans">0</text><line x1="795.3" y1="446.4" x2="1006" y2="446.4" stroke="#ccc" stroke-width="0.8"/><line x1="865.5" y1="446.4" x2="865.5" y2="449" stroke="#ccc" stroke-width="0.7"/><line x1="936.3" y1="446.4" x2="936.3" y2="449" stroke="#ccc" stroke-width="0.7"/><rect x="817.2" y="402.5" width="12.8" height="43.9" fill="#cdc686"/><rect x="830" y="394.8" width="12.5" height="51.6" fill="#e8525a"/><rect x="888" y="377.2" width="13.0" height="69.2" fill="#cdc686"/><rect x="901" y="367.1" width="12.4" height="79.3" fill="#e8525a"/><rect x="959" y="434.6" width="12.8" height="11.8" fill="#cdc686"/><rect x="971.8" y="411" width="12.2" height="35.4" fill="#e8525a"/><rect x="888" y="351.9" width="13" height="25.3" fill="#97b07e"/><text x="830" y="456" font-size="4.8" text-anchor="middle" fill="#666" font-family="Liberation Sans">External</text><text x="901" y="456" font-size="4.8" text-anchor="middle" fill="#666" font-family="Liberation Sans">Internal</text><text x="972.4" y="456" font-size="4.8" text-anchor="middle" fill="#666" font-family="Liberation Sans">Stumpage</text><rect x="868.9" y="462" width="4.6" height="4.6" fill="#cdc686"/><text x="871.2" y="474.3" font-size="4.8" text-anchor="middle" fill="#666" font-family="Liberation Sans">CC</text><rect x="886.5" y="462" width="4.6" height="4.6" fill="#97b07e"/><text x="888.8" y="474.3" font-size="4.8" text-anchor="middle" fill="#666" font-family="Liberation Sans">Thin</text><rect x="908.7" y="462" width="4.6" height="4.6" fill="#e8525a"/><text x="911" y="474.3" font-size="4.8" text-anchor="middle" fill="#666" font-family="Liberation Sans">Target</text></svg>
<div class="a" style="left:204px;top:186px;width:616.5px;height:126.6px;background:#fff;border:1px solid #dedede;border-radius:2px;box-shadow:0 3px 4px -1px rgba(0,0,0,0.2)"></div>
<div class="a" style="left:205px;top:207.2px;width:614.5px;height:0.8px;background:#e9e9e9"></div>
<div class="a" style="left:214px;top:191.6px;font-size:9px;line-height:11px;color:#5a5a5a;letter-spacing:-0.27px">Assignment Prediction Results: Unit-00156</div>
<svg class="a" style="left:800px;top:189px" width="16" height="16"><path d="M5.8 5 L11.2 10.4 M11.2 5 L5.8 10.4" stroke="#333" stroke-width="0.95"/></svg>
<div class="a" style="left:214px;top:217.1px;font-size:6.4px;line-height:8px;color:#333;font-weight:bold">This assignment is likely to be early due to:</div>
<div class="a" style="left:223.6px;top:231px;width:2.2px;height:2.2px;border-radius:50%;background:#333"></div>
<div class="a" style="left:223.6px;top:238.7px;width:2.2px;height:2.2px;border-radius:50%;background:#333"></div>
<div class="a" style="left:230.8px;top:228.6px;font-size:5.85px;line-height:7px;color:#555">Production Rate</div>
<div class="a" style="left:230.8px;top:236.4px;font-size:5.85px;line-height:7px;color:#555">Volume</div>
<div class="a" style="left:213.7px;top:265.2px;width:597.8px;height:30.5px;background:#f3f3f3"></div>
<div class="a" style="left:213.7px;top:265px;width:597.8px;height:0.9px;background:#e4e4e4"></div>
<div class="a" style="left:213.7px;top:280.6px;width:597.8px;height:0.6px;background:#f0f0f0"></div>
<div class="a" style="left:333.2px;top:249.5px;width:0.7px;height:46px;background:#e6e6e6"></div>
<div class="a" style="left:452.8px;top:249.5px;width:0.7px;height:46px;background:#e6e6e6"></div>
<div class="a" style="left:572.6px;top:249.5px;width:0.7px;height:46px;background:#e6e6e6"></div>
<div class="a" style="left:692.4px;top:249.5px;width:0.7px;height:46px;background:#e6e6e6"></div>
<div class="a" style="left:216.5px;top:254.9px;font-size:5.95px;line-height:7px;color:#9a9a9a">Attribute</div>
<div class="a" style="left:349.5px;width:100px;text-align:right;top:254.8px;font-size:5.95px;line-height:7px;color:#9a9a9a">Current Value</div>
<div class="a" style="left:469.0px;width:100px;text-align:right;top:254.8px;font-size:5.95px;line-height:7px;color:#9a9a9a">Predicted Value</div>
<div class="a" style="left:582.4px;width:100px;text-align:center;top:254.8px;font-size:5.95px;line-height:7px;color:#9a9a9a">Confidence Rating</div>
<div class="a" style="left:696.0px;top:254.8px;font-size:5.95px;line-height:7px;color:#9a9a9a">Action</div>
<div class="a" style="left:216.5px;top:271.0px;font-size:5.95px;line-height:7px;color:#777">Production Rate</div>
<div class="a" style="left:216.5px;top:285.4px;font-size:5.95px;line-height:7px;color:#777">Volume (M3/Ha)</div>
<div class="a" style="left:349.5px;width:100px;text-align:right;top:270.8px;font-size:5.95px;line-height:7px;color:#777">130.0</div>
<div class="a" style="left:349.5px;width:100px;text-align:right;top:285.2px;font-size:5.95px;line-height:7px;color:#777">659.4</div>
<div class="a" style="left:469.0px;width:100px;text-align:right;top:270.8px;font-size:5.95px;line-height:7px;color:#777">104.9</div>
<div class="a" style="left:469.0px;width:100px;text-align:right;top:285.2px;font-size:5.95px;line-height:7px;color:#777">171.9</div>
<div class="a" style="left:696.0px;top:270.7px;font-size:5.95px;line-height:7px;color:#4a7fc0">Adjust Rate</div>
<div class="a" style="left:696.0px;top:285.2px;font-size:5.95px;line-height:7px;color:#4a7fc0">Adjust Volume</div>
<svg class="a" style="left:620px;top:265px" width="30" height="40" viewBox="620 265 30 40">
<circle cx="632.4" cy="274.2" r="2.6" fill="#2a9d4a"/><path d="M631 274.3 L632 275.3 L633.9 273.2" fill="none" stroke="#fff" stroke-width="0.8"/>
<circle cx="632.4" cy="288.9" r="2.6" fill="#2a9d4a"/><path d="M631 289 L632 290 L633.9 287.9" fill="none" stroke="#fff" stroke-width="0.8"/>
</svg>
<div class="a" style="left:547.4px;top:300.4px;width:170.6px;height:39.2px;background:#fff;border:1px solid #e6e6e6;border-radius:2px;box-shadow:0 1.5px 3px rgba(0,0,0,0.14)"></div>
<svg class="a" style="left:555px;top:306px" width="22" height="22" viewBox="555 306 22 22">
<circle cx="565" cy="316.6" r="7.4" fill="#27a745"/><path d="M561.3 316.8 L564 319.4 L569 314.2" fill="none" stroke="#fff" stroke-width="1.7"/>
</svg>
<div class="a" style="left:587px;top:305.8px;font-size:5.0px;line-height:7px;color:#333"><b>Confidence Rating:</b> High</div>
<div class="a" style="left:587px;top:314.6px;font-size:5.0px;line-height:7px;color:#888;font-style:italic">Data quality and quantity are considered excellent</div>
<div class="a" style="left:587px;top:323.8px;font-size:5.06px;line-height:7px;color:#333"><b>Recommendation:</b> Use predicted value</div>
<svg class="a" style="left:634px;top:287px" width="12" height="14" viewBox="634 287 12 14">
<path d="M636.3 288.3 L636.3 296.6 L638.2 294.9 L639.6 297.9 L640.9 297.3 L639.6 294.4 L642.2 294.2 Z" fill="#fff" stroke="#222" stroke-width="0.6"/>
</svg>
</body></html>
